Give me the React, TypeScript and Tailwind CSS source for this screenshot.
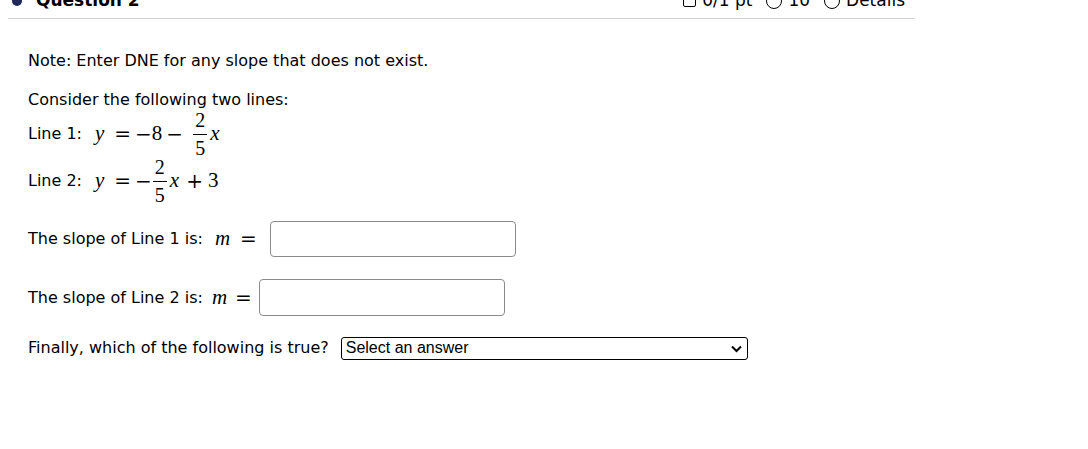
import React from "react";

// operators look closer to the TeX glyphs in DejaVu Serif
const Op = ({ c, className = "" }: { c: string; className?: string }) => (
  <span className={"font-['DejaVu_Serif',serif] text-[20px] leading-none " + className}>{c}</span>
);

const Frac = ({ n, d, className = "" }: { n: string; d: string; className?: string }) => (
  <span className={"inline-flex flex-col items-center leading-none text-[20px] " + className}>
    <span className="px-[2px] pb-[4px]">{n}</span>
    <span className="w-full border-t border-black" />
    <span className="px-[2px] pt-[3px]">{d}</span>
  </span>
);

const MathText = ({ children, className = "" }: { children: React.ReactNode; className?: string }) => (
  <span className={"inline-flex items-center font-['Liberation_Serif',serif] text-[21px] " + className}>
    {children}
  </span>
);

const App: React.FC = () => {
  return (
    <div className="w-[1088px] h-[449px] overflow-hidden bg-white text-black text-[16px] font-['DejaVu_Sans','Noto_Sans',sans-serif]">
      {/* header, mostly scrolled off */}
      <div className="w-[907px] ml-[8px] -mt-[17px] h-[36px] flex items-center justify-between border-b border-[#d0d0d0] pl-[4px] pr-[10px]">
        <div className="flex items-center gap-[14px] font-bold text-[17px]">
          <span className="w-[10px] h-[10px] rounded-full bg-[#1f2a5a]" />
          <span>Question 2</span>
        </div>
        <div className="flex items-center gap-[6px] text-[17px]">
          <span className="w-[13px] h-[13px] border border-black rounded-[2px]" />
          <span className="mr-[8px]">0/1 pt</span>
          <span className="w-[16px] h-[16px] border-[1.5px] border-black rounded-full" />
          <span className="mr-[8px]">10</span>
          <span className="w-[16px] h-[16px] border-[1.5px] border-black rounded-full" />
          <span>Details</span>
        </div>
      </div>

      <div className="pl-[28px] pt-[31px]">
        <p className="h-[22px] leading-[22px]">Note: Enter DNE for any slope that does not exist.</p>

        <p className="mt-[17px] h-[22px] leading-[22px]">Consider the following two lines:</p>

        <div className="flex items-center h-[46px]">
          <span>Line 1:</span>
          <MathText className="ml-[13px]">
            <i>y</i>
            <Op c="=" className="ml-[10px]" />
            <Op c="−" className="ml-[4px]" />
            <span>8</span>
            <Op c="−" className="ml-[4px]" />
            <Frac n="2" d="5" className="ml-[10px]" />
            <i className="ml-[3px]">x</i>
          </MathText>
        </div>

        <div className="flex items-center h-[46px] mt-[1px]">
          <span>Line 2:</span>
          <MathText className="ml-[13px]">
            <i>y</i>
            <Op c="=" className="ml-[10px]" />
            <Op c="−" className="ml-[4px]" />
            <Frac n="2" d="5" className="ml-[1px]" />
            <i className="ml-[3px]">x</i>
            <Op c="+" className="ml-[7px]" />
            <span className="ml-[5px]">3</span>
          </MathText>
        </div>

        <div className="flex items-center mt-[17px]">
          <span>The slope of Line 1 is:</span>
          <MathText className="ml-[12px]">
            <i>m</i>
            <Op c="=" className="ml-[10px]" />
          </MathText>
          <input
            type="text"
            className="ml-[13px] w-[246px] h-[36px] border border-[#8a8a8a] rounded-[4px] px-2 outline-none"
          />
        </div>

        <div className="flex items-center mt-[22px]">
          <span>The slope of Line 2 is:</span>
          <MathText className="ml-[9px]">
            <i>m</i>
            <Op c="=" className="ml-[8px]" />
          </MathText>
          <input
            type="text"
            className="ml-[7px] w-[246px] h-[37px] border border-[#8a8a8a] rounded-[4px] px-2 outline-none"
          />
        </div>

        <div className="flex items-center mt-[20px]">
          <span>Finally, which of the following is true?</span>
          <div className="relative ml-[12px] flex">
            <select
              className="appearance-none w-[407px] h-[23px] border-[1.5px] border-black rounded-[3px] pl-[4px] text-[16px] leading-none bg-white outline-none font-['Liberation_Sans',Arial,sans-serif]"
              defaultValue=""
            >
              <option value="">Select an answer</option>
            </select>
            <svg
              className="absolute right-[6px] top-[8px] pointer-events-none"
              width="11"
              height="8"
              viewBox="0 0 11 8"
            >
              <path d="M1 1.5 L5.5 6 L10 1.5" fill="none" stroke="black" strokeWidth="2" />
            </svg>
          </div>
        </div>
      </div>
    </div>
  );
};

export default App;
